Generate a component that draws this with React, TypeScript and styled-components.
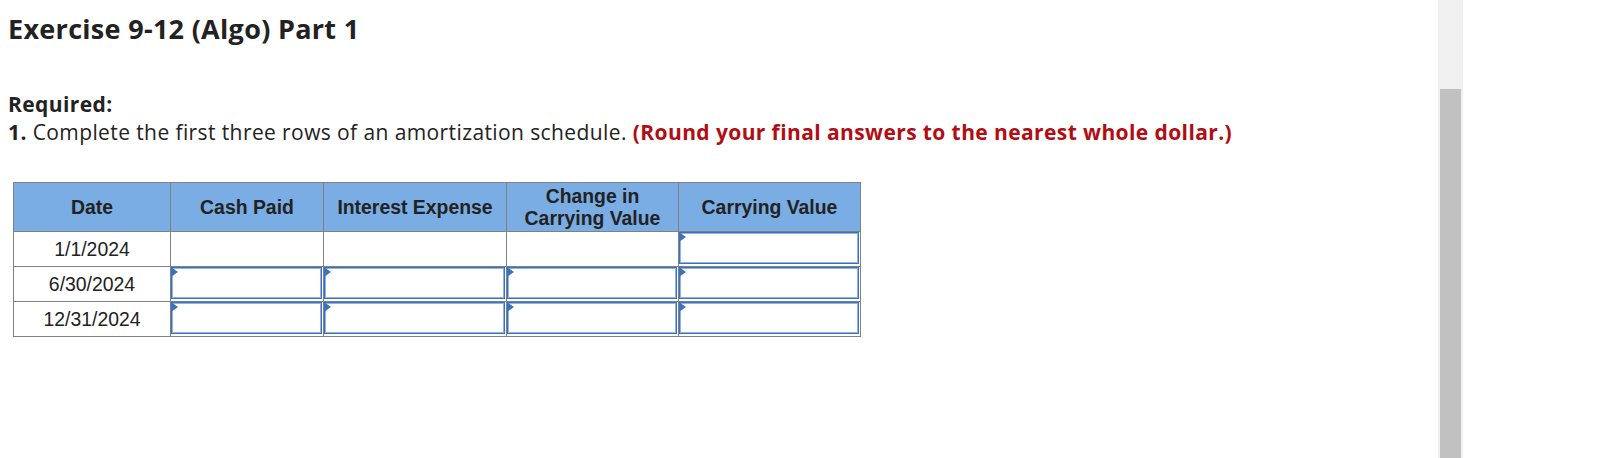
import React from "react";
import styled, { createGlobalStyle } from "styled-components";

const Global = createGlobalStyle`
  html, body { margin: 0; padding: 0; background: #fff; }
  body { width: 1612px; height: 458px; overflow: hidden; }
`;

const Page = styled.div`
  display: flex;
  width: 1612px;
  height: 458px;
`;

const Content = styled.div`
  width: 1438px;
  padding: 13px 0 0 8px;
  box-sizing: border-box;
  font-family: "Open Sans", Lato, sans-serif;
  color: #222;
`;

const Title = styled.h1`
  margin: 0;
  font-size: 27px;
  letter-spacing: 0.3px;
  line-height: 32px;
  font-weight: 700;
  color: #222;
`;

const Section = styled.div`
  margin-top: 45px;
  font-size: 21px;
  letter-spacing: 0.4px;
  line-height: 28px;
`;

const Strong = styled.b`
  font-weight: 700;
`;

const Red = styled.b`
  font-weight: 700;
  color: #b10d13;
`;

const Table = styled.table`
  margin: 36px 0 0 5px;
  border-collapse: collapse;
  font-family: "Liberation Sans", Arial, sans-serif;
  font-size: 19.4px;
  color: #222;
  border: 1px solid #808080;
`;

const Th = styled.th<{ $w: number }>`
  width: ${(p) => p.$w}px;
  height: 48px;
  padding: 0;
  background: #79ade4;
  border: 1px solid #808080;
  font-weight: 700;
  line-height: 22px;
  text-align: center;
`;

const Td = styled.td`
  height: 33px;
  padding: 0;
  border: 1px solid #808080;
  text-align: center;
  vertical-align: middle;
  line-height: 22px;
`;

const InputCell = styled.td`
  height: 33px;
  padding: 0 1px 1px 0;
  border: 1px solid #808080;
  vertical-align: top;
`;

const InputBox = styled.div`
  position: relative;
  height: 32px;
  box-sizing: border-box;
  border: 1px solid #3a72bf;
  box-shadow: inset 0 0 0 1px #8fb3e3;
  background: #fff;
`;

const Marker = styled.span`
  position: absolute;
  left: -1px;
  top: -1px;
  width: 0;
  height: 0;
  border-top: 5px solid transparent;
  border-bottom: 5px solid transparent;
  border-left: 7px solid #3a72c0;
`;

const ScrollTrack = styled.div`
  width: 25px;
  height: 458px;
  background: #f0f0f0;
  display: flex;
  flex-direction: column;
  align-items: center;
  padding-top: 89px;
  box-sizing: border-box;
`;

const ScrollThumb = styled.div`
  width: 21px;
  flex: 1;
  background: #c1c1c1;
`;

const Input = () => (
  <InputCell>
    <InputBox>
      <Marker />
    </InputBox>
  </InputCell>
);

const rows = [
  { date: "1/1/2024", inputs: [false, false, false, true] },
  { date: "6/30/2024", inputs: [true, true, true, true] },
  { date: "12/31/2024", inputs: [true, true, true, true] },
];

export default function App() {
  return (
    <>
      <Global />
      <Page>
        <Content>
          <Title>Exercise 9-12 (Algo) Part 1</Title>
          <Section>
            <Strong>Required:</Strong>
            <br />
            <Strong>1.</Strong> Complete the first three rows of an amortization schedule.{" "}
            <Red>(Round your final answers to the nearest whole dollar.)</Red>
          </Section>
          <Table>
            <thead>
              <tr>
                <Th $w={156}>Date</Th>
                <Th $w={152}>Cash Paid</Th>
                <Th $w={182}>Interest Expense</Th>
                <Th $w={171}>
                  Change in
                  <br />
                  Carrying Value
                </Th>
                <Th $w={181}>Carrying Value</Th>
              </tr>
            </thead>
            <tbody>
              {rows.map((r) => (
                <tr key={r.date}>
                  <Td>{r.date}</Td>
                  {r.inputs.map((i, k) => (i ? <Input key={k} /> : <Td key={k} />))}
                </tr>
              ))}
            </tbody>
          </Table>
        </Content>
        <ScrollTrack>
          <ScrollThumb />
        </ScrollTrack>
      </Page>
    </>
  );
}
